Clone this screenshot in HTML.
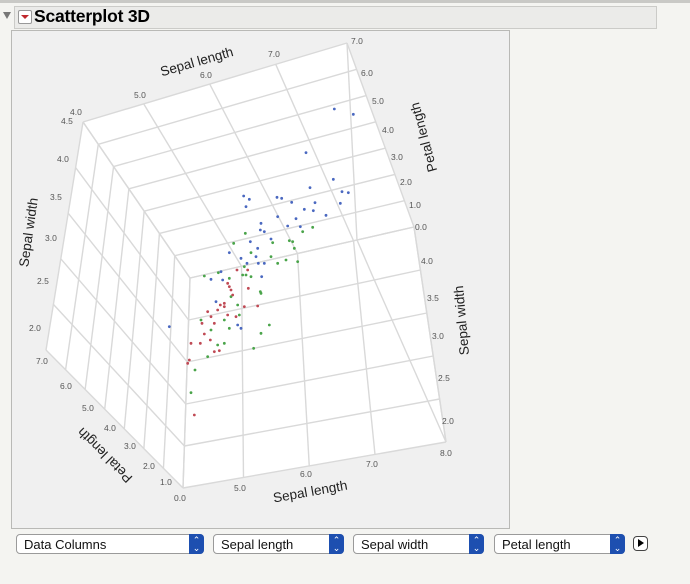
<!DOCTYPE html>
<html><head><meta charset="utf-8">
<style>
html,body{margin:0;padding:0;}
body{width:690px;height:584px;background:#f4f4f1;position:relative;overflow:hidden;font-family:"Liberation Sans",sans-serif;}
.topline{position:absolute;left:0;top:0;width:690px;height:3px;background:#c9c9c6;}
.hdr{position:absolute;left:14px;top:6px;width:641px;height:21px;background:#ebebe9;border:1px solid #cbcbc8;}
.tri{position:absolute;left:3px;top:12px;width:0;height:0;border-left:4px solid transparent;border-right:4px solid transparent;border-top:7px solid #777;}
.rbtn{position:absolute;left:18px;top:10px;width:12px;height:12px;background:#fff;border:1px solid #999;border-radius:2px;}
.rbtn:after{content:"";position:absolute;left:2px;top:4px;border-left:4px solid transparent;border-right:4px solid transparent;border-top:4px solid #c0282d;}
.title{position:absolute;left:34px;top:6px;font-size:17.5px;font-weight:bold;color:#000;letter-spacing:-0.2px;}
.plot{position:absolute;left:11px;top:30px;width:497px;height:497px;background:#f0f0f0;border:1px solid #b9b9b6;}
.sel{position:absolute;top:534px;height:20px;background:#fff;border:1px solid #9a9a9a;border-radius:4px;font-size:13px;line-height:20px;box-sizing:border-box;padding-left:7px;color:#111;}
.sel .b{position:absolute;right:-1px;top:-1px;width:15px;height:20px;background:#1d4fb0;border-radius:0 4px 4px 0;color:#fff;font-size:9px;line-height:8px;text-align:center;padding-top:2px;box-sizing:border-box;}
.go{position:absolute;left:633px;top:536px;width:15px;height:15px;border:1px solid #444;border-radius:4px;background:#fff;box-sizing:border-box;}
.go:after{content:"";position:absolute;left:4px;top:2px;border-top:4.5px solid transparent;border-bottom:4.5px solid transparent;border-left:6px solid #000;}
</style></head><body>
<div class="topline"></div>
<div class="tri"></div>
<div class="hdr"></div>
<div class="rbtn"></div>
<div class="title">Scatterplot 3D</div>
<div class="plot"></div>
<svg id="s" width="690" height="584" style="position:absolute;left:0;top:0" xmlns="http://www.w3.org/2000/svg" font-family="Liberation Sans, sans-serif"></svg>
<div class="sel" style="left:16px;width:188px">Data Columns<div class="b">&#8963;<br>&#8964;</div></div>
<div class="sel" style="left:213px;width:131px">Sepal length<div class="b">&#8963;<br>&#8964;</div></div>
<div class="sel" style="left:353px;width:131px">Sepal width<div class="b">&#8963;<br>&#8964;</div></div>
<div class="sel" style="left:494px;width:131px">Petal length<div class="b">&#8963;<br>&#8964;</div></div>
<div class="go"></div>
<script>
var s=document.getElementById('s'),NS='http://www.w3.org/2000/svg';
function el(n,a,t){var e=document.createElementNS(NS,n);for(var k in a)e.setAttribute(k,a[k]);if(t)e.textContent=t;s.appendChild(e);return e;}
var O=[190,278],L=[83,122],T=[347,43],R=[414,227],E=[46,350],B=[183,488],C=[446,442],M=[357,240],N=[373,277];
function lp(a,b,t){return [a[0]+(b[0]-a[0])*t,a[1]+(b[1]-a[1])*t];}
function poly(p){el('polygon',{points:p.map(function(q){return q.join(',')}).join(' '),fill:'#fff'});}
poly([O,L,T,R]);poly([O,L,E,B]);poly([O,R,C,B]);
var G={stroke:'#d9d9d9','stroke-width':1.4,fill:'none'};
function ln(a,b){el('line',Object.assign({x1:a[0],y1:a[1],x2:b[0],y2:b[1]},G));}
function fam(a1,a2,b1,b2,ts){ts.forEach(function(t){ln(lp(a1,a2,t),lp(b1,b2,t));});}
var sl=[0,0.23,0.48,0.73,1],k7=[],k5=[];
for(var i=0;i<=7;i++)k7.push(i/7);for(i=0;i<=5;i++)k5.push(i/5);
fam(L,T,O,R,sl);fam(L,O,T,R,k7);
fam(L,E,O,B,k5);fam(L,O,E,B,k7);
fam(O,R,B,C,sl);fam(O,B,R,C,k5);
ln(T,M);ln(M,N);ln(N,C);ln(R,C);
function P(x,y){return [11+x/3,30+y/3];}
var blue=[[970,237],[1027,253],[885,368],[967,448],[897,473],[993,485],[1012,488],[988,520],[912,518],[880,538],[907,542],[945,556],[855,566],[868,590],[800,560],[830,588],[750,580],[748,600],[760,605],[698,498],[715,508],[705,530],[798,502],[812,505],[842,517],[718,635],[740,655],[780,627],[655,668],[690,685],[708,700],[742,700],[752,740],[600,748],[635,750],[630,725],[680,885],[690,895],[615,815],[475,890],[735,680],[760,700]];
var green=[[703,610],[668,640],[580,738],[622,728],[655,745],[720,668],[780,680],[825,690],[800,700],[860,695],[835,632],[845,635],[850,655],[875,605],[905,592],[785,638],[700,710],[705,735],[720,740],[750,790],[660,800],[680,825],[685,855],[775,885],[750,910],[640,940],[620,945],[590,980],[552,1020],[540,1088],[728,955],[640,870],[655,895],[570,870],[600,900],[748,785],[695,735]];
var red=[[710,720],[678,720],[650,760],[660,780],[712,775],[640,830],[620,840],[590,845],[600,860],[650,855],[675,860],[700,830],[740,828],[610,880],[573,880],[580,912],[568,940],[540,940],[598,930],[610,965],[625,962],[535,990],[530,1000],[550,1155],[628,825],[665,795],[640,820],[655,770]];
[[blue,'#4a68c0'],[green,'#4aa44a'],[red,'#c04a55']].forEach(function(g){g[0].forEach(function(q){var p=P(q[0],q[1]);el('circle',{cx:p[0],cy:p[1],r:1.4,fill:g[1]});});});
var TK={'font-size':8.5,fill:'#555'};
function tx(x,y,t,extra){el('text',Object.assign({x:x,y:y},TK,extra||{}),t);}
tx(134,98,'5.0');tx(200,78,'6.0');tx(268,57,'7.0');tx(351,44,'7.0');
tx(361,76,'6.0');tx(372,104,'5.0');tx(382,133,'4.0');tx(391,160,'3.0');tx(400,185,'2.0');tx(409,208,'1.0');tx(415,230,'0.0');
tx(421,264,'4.0');tx(427,301,'3.5');tx(432,339,'3.0');tx(438,381,'2.5');tx(442,424,'2.0');tx(440,456,'8.0');
tx(366,467,'7.0');tx(300,477,'6.0');tx(234,491,'5.0');tx(174,501,'0.0');
tx(70,115,'4.0');tx(61,124,'4.5');tx(57,162,'4.0');tx(50,200,'3.5');tx(45,241,'3.0');tx(37,284,'2.5');tx(29,331,'2.0');
tx(36,364,'7.0');tx(60,389,'6.0');tx(82,411,'5.0');tx(104,431,'4.0');tx(124,449,'3.0');tx(143,469,'2.0');tx(160,485,'1.0');
var AX={'font-size':13.5,fill:'#222','text-anchor':'middle'};
el('text',Object.assign({transform:'translate(198,66) rotate(-16)'},AX),'Sepal length');
el('text',Object.assign({transform:'translate(311,496) rotate(-10)'},AX),'Sepal length');
el('text',Object.assign({transform:'translate(33,233) rotate(-82)'},AX),'Sepal width');
el('text',Object.assign({transform:'translate(466,320) rotate(-95)'},AX),'Sepal width');
el('text',Object.assign({transform:'translate(428,136) rotate(-105)'},AX),'Petal length');
el('text',Object.assign({transform:'translate(108,452) rotate(225)'},AX),'Petal length');
</script>
</body></html>
